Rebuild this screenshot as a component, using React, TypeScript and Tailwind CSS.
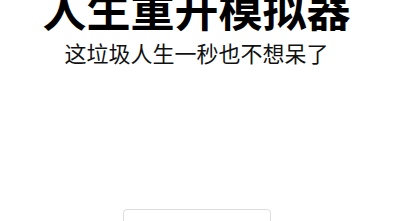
import React from 'react';

const App: React.FC = () => {
  return (
    <div
      className="min-h-screen bg-white flex flex-col items-center overflow-hidden"
      style={{ fontFamily: '"Noto Sans CJK SC", "Noto Sans", sans-serif' }}
    >
      <h1 className="mt-[-14px] text-[44px] leading-[44px] font-bold text-black">人生重开模拟器</h1>
      <p className="mt-[11px] text-[22px] leading-[22px] text-[#111]">这垃圾人生一秒也不想呆了</p>
      <button className="mt-[146px] w-[148px] h-[46px] border border-[#dddddd] rounded-[4px] bg-white text-[20px] text-[#333]">
        立即重开
      </button>
    </div>
  );
};

export default App;
